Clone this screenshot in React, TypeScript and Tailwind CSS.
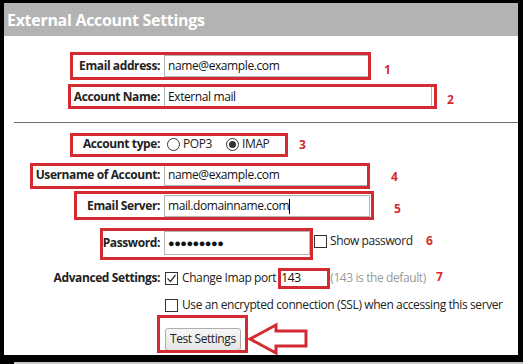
import React from 'react';

const font = { fontFamily: '"Open Sans", "Noto Sans", sans-serif' };

function Field({ label, value, width, caret }: { label: string; value: string; width: string; caret?: boolean }) {
  return (
    <div className="flex items-center h-[22px]">
      <div className="w-[160px] pr-[4px] text-right font-bold text-[12px] text-[#222]">{label}</div>
      <div className={`${width} h-[22px] border border-[#b4b4b4] bg-white flex items-center pl-[3px] text-[12px] text-[#111]`}>
        {value}
        {caret && <span className="inline-block w-px h-[15px] bg-black" />}
      </div>
    </div>
  );
}

function Box({ className }: { className: string }) {
  return <div className={`absolute border-[3px] border-[#d42a32] ${className}`} />;
}

function Num({ n, className }: { n: string; className: string }) {
  return <div className={`absolute text-[12px] font-bold text-[#d42a32] leading-none ${className}`}>{n}</div>;
}

function Check({ checked }: { checked?: boolean }) {
  return (
    <span className="inline-flex items-center justify-center w-[13px] h-[13px] border border-[#333] bg-white">
      {checked && (
        <svg width="11" height="11" viewBox="0 0 11 11">
          <path d="M1.5 5.5 L4.5 8.5 L9.5 2" fill="none" stroke="#333" strokeWidth="1.3" />
        </svg>
      )}
    </span>
  );
}

function Radio({ checked }: { checked?: boolean }) {
  return (
    <span className="inline-flex items-center justify-center w-[13px] h-[13px] rounded-full border border-[#333] bg-white">
      {checked && <span className="w-[7px] h-[7px] rounded-full bg-[#333]" />}
    </span>
  );
}

export default function App() {
  return (
    <div className="relative w-[523px] h-[364px] bg-black overflow-hidden tracking-[-0.4px]" style={font}>
      <div className="ml-[4px] mt-[3px] w-[514px] h-[352px] bg-white">
        <div className="h-[33px] bg-[#b3b3b3] flex items-center pl-[3px] text-white font-bold text-[16px] tracking-[-0.3px]">
          External Account Settings
        </div>

        <div className="mt-[19px]">
          <Field label="Email address:" value="name@example.com" width="w-[205px]" />
        </div>
        <div className="mt-[9px]">
          <Field label="Account Name:" value="External mail" width="w-[268px]" />
        </div>

        <div className="mt-[14px] ml-[10px] h-px bg-[#6e6e6e]" />

        <div className="mt-[10px] flex items-center h-[22px]">
          <div className="w-[160px] pr-[4px] text-right font-bold text-[12px] text-[#222]">Account type:</div>
          <label className="flex items-center gap-[3px] text-[12px] text-[#222] ml-[3px]">
            <Radio /> POP3
          </label>
          <label className="flex items-center gap-[3px] text-[12px] text-[#222] ml-[14px]">
            <Radio checked /> IMAP
          </label>
        </div>

        <div className="mt-[9px]">
          <Field label="Username of Account:" value="name@example.com" width="w-[204px]" />
        </div>
        <div className="mt-[9px]">
          <Field label="Email Server:" value="mail.domainname.com" width="w-[206px]" caret />
        </div>

        <div className="mt-[15px] flex items-center h-[22px]">
          <div className="w-[160px] pr-[4px] text-right font-bold text-[12px] text-[#222]">Password:</div>
          <div className="w-[146px] h-[24px] border border-[#b4b4b4] flex items-center pl-[3px] text-[11px] tracking-[-0.5px] text-[#111]">
            ●●●●●●●●●
          </div>
          <label className="flex items-center gap-[3px] ml-[4px] self-start text-[12px] text-[#222]">
            <Check /> Show password
          </label>
        </div>

        <div className="mt-[14px] flex items-center h-[20px]">
          <div className="w-[160px] pr-[4px] text-right font-bold text-[12px] text-[#222]">Advanced Settings:</div>
          <label className="flex items-center gap-[4px] ml-[1px] text-[12px] text-[#222]">
            <Check checked /> Change Imap port
          </label>
          <div className="ml-[3px] w-[44px] h-[18px] bg-white flex items-center pl-[2px] text-[12px] text-[#111]">143</div>
          <span className="ml-[7px] text-[12px] text-[#9a9a9a]">(143 is the default)</span>
        </div>

        <div className="mt-[8px] flex items-center h-[18px] pl-[161px]">
          <label className="flex items-center gap-[4px] text-[12px] text-[#222] whitespace-nowrap">
            <Check /> Use an encrypted connection (SSL) when accessing this server
          </label>
        </div>

        <div className="mt-[11px] pl-[161px]">
          <button className="h-[23px] px-[4px] border border-[#adadad] rounded-[3px] bg-gradient-to-b from-[#f7f7f7] to-[#e5e5e5] text-[12px] text-[#222]">
            Test Settings
          </button>
        </div>
      </div>

      <div className="absolute left-[14px] top-[362px] w-[509px] h-[2px] bg-[#c8c8c8]" />

      <div className="absolute inset-0 pointer-events-none">
        <Box className="left-[70px] top-[52px] w-[301px] h-[28px]" />
        <Box className="left-[68px] top-[84px] w-[369px] h-[25px]" />
        <Box className="left-[70px] top-[133px] w-[218px] h-[24px]" />
        <Box className="left-[30px] top-[163px] w-[340px] h-[26px]" />
        <Box className="left-[74px] top-[191px] w-[300px] h-[29px]" />
        <Box className="left-[100px] top-[228px] w-[213px] h-[32px]" />
        <Box className="left-[278px] top-[268px] w-[52px] h-[21px]" />
        <Box className="left-[157px] top-[315px] w-[91px] h-[38px]" />

        <Num n="1" className="left-[384px] top-[64px]" />
        <Num n="2" className="left-[447px] top-[94px]" />
        <Num n="3" className="left-[299px] top-[139px]" />
        <Num n="4" className="left-[391px] top-[171px]" />
        <Num n="5" className="left-[394px] top-[203px]" />
        <Num n="6" className="left-[426px] top-[235px]" />
        <Num n="7" className="left-[436px] top-[271px]" />

        <svg className="absolute left-[247px] top-[322px]" width="62" height="33" viewBox="0 0 62 33">
          <polygon points="3,17 29,3 29,9 59,9 59,24 29,24 29,31" fill="white" stroke="#d42a32" strokeWidth="3" strokeLinejoin="miter" />
        </svg>
      </div>
    </div>
  );
}
